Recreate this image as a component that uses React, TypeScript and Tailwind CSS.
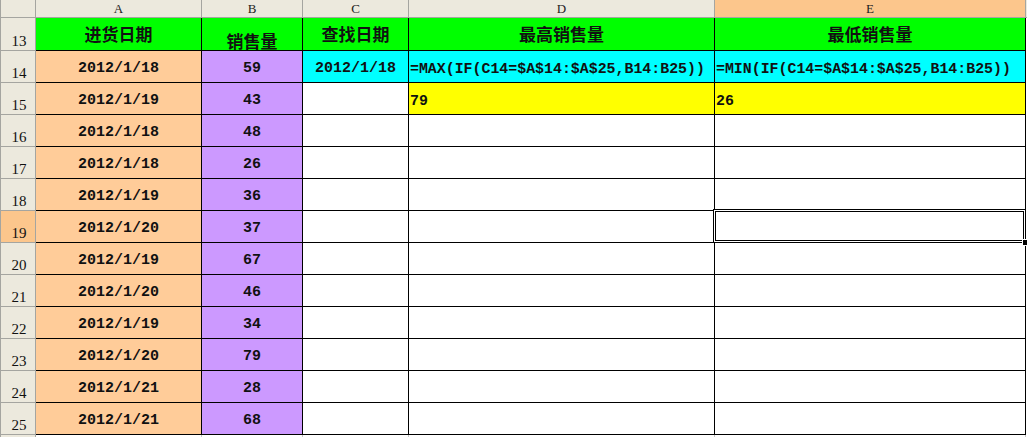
import React from "react";

const MONO = "font-['Liberation_Mono','DejaVu_Sans_Mono',monospace]";
const CJK = "font-['Noto_Sans_CJK_SC',sans-serif]";
const SERIF = "font-['Liberation_Serif','DejaVu_Serif',serif]";

const widths = ["w-[166px]", "w-[101px]", "w-[106px]", "w-[306px]", "w-[311px]"];

const data: [string, string][] = [
  ["2012/1/18", "59"],
  ["2012/1/19", "43"],
  ["2012/1/18", "48"],
  ["2012/1/18", "26"],
  ["2012/1/19", "36"],
  ["2012/1/20", "37"],
  ["2012/1/19", "67"],
  ["2012/1/20", "46"],
  ["2012/1/19", "34"],
  ["2012/1/20", "79"],
  ["2012/1/21", "28"],
  ["2012/1/21", "68"],
];

function RowHeader({ n, sel, h }: { n: string; sel?: boolean; h: string }) {
  return (
    <div
      className={`${h} w-[36px] shrink-0 border-l border-r border-b border-[#a5a5a0] ${
        sel ? "bg-[#fcc68c]" : "bg-[#ece9dd]"
      } flex items-end justify-center pb-[1px] pl-[2px] text-[15px] leading-none text-[#111] ${SERIF}`}
    >
      {n}
    </div>
  );
}

export default function App() {
  const cols = ["A", "B", "C", "D", "E"];
  return (
    <div className="w-[1027px] h-[437px] overflow-hidden bg-white">
      {/* column header */}
      <div className="flex h-[18px]">
        <div className="w-[36px] shrink-0 border-l border-r border-b border-[#a5a5a0] bg-[#ece9dd]" />
        {cols.map((c, i) => (
          <div
            key={c}
            className={`${widths[i]} shrink-0 border-r border-b border-[#a5a5a0] ${
              c === "E" ? "bg-[#fcc68c]" : "bg-[#ece9dd]"
            } flex items-center justify-center text-[13px] leading-none text-[#222] ${SERIF}`}
          >
            {c}
          </div>
        ))}
        <div className="flex-1 bg-[#ece9dd] border-b border-[#a5a5a0]" />
      </div>

      {/* row 13 */}
      <div className="flex h-[33px]">
        <RowHeader n="13" h="h-[33px]" />
        <div className={`${widths[0]} shrink-0 border-r border-b border-black bg-[#00ff00] flex items-center justify-center text-[17px] font-bold text-[#111] ${CJK}`}>
          进货日期
        </div>
        <div className={`${widths[1]} shrink-0 border-r border-b border-black bg-[#00ff00] flex items-end justify-center text-[17px] font-bold leading-[19px] text-[#111] ${CJK}`}>
          销售量
        </div>
        <div className={`${widths[2]} shrink-0 border-r border-b border-black bg-[#00ff00] flex items-center justify-center text-[17px] font-bold text-[#111] ${CJK}`}>
          查找日期
        </div>
        <div className={`${widths[3]} shrink-0 border-r border-b border-black bg-[#00ff00] flex items-center justify-center text-[17px] font-bold text-[#111] ${CJK}`}>
          最高销售量
        </div>
        <div className={`${widths[4]} shrink-0 border-r border-b border-black bg-[#00ff00] flex items-center justify-center text-[17px] font-bold text-[#111] ${CJK}`}>
          最低销售量
        </div>
        <div className="flex-1" />
      </div>

      {data.map(([d, v], idx) => {
        const rn = 14 + idx;
        const cBg = rn === 14 ? "bg-[#00ffff]" : "bg-white";
        const dBg = rn === 14 ? "bg-[#00ffff]" : rn === 15 ? "bg-[#ffff00]" : "bg-white";
        const dText =
          rn === 14
            ? "=MAX(IF(C14=$A$14:$A$25,B14:B25))"
            : rn === 15
            ? "79"
            : "";
        const eText =
          rn === 14
            ? "=MIN(IF(C14=$A$14:$A$25,B14:B25))"
            : rn === 15
            ? "26"
            : "";
        const sel = rn === 19;
        return (
          <div key={rn} className="flex h-[32px]">
            <RowHeader n={String(rn)} sel={sel} h="h-[32px]" />
            <div className={`${widths[0]} shrink-0 border-r border-b border-black bg-[#ffcc99] flex items-center justify-center pt-[6px] text-[15px] font-bold text-[#111] ${MONO}`}>
              {d}
            </div>
            <div className={`${widths[1]} shrink-0 border-r border-b border-black bg-[#cc99ff] flex items-center justify-center pt-[6px] text-[15px] font-bold text-[#111] ${MONO}`}>
              {v}
            </div>
            <div className={`${widths[2]} shrink-0 border-r border-b border-black ${cBg} flex items-center justify-center pt-[6px] text-[15px] font-bold text-[#111] ${MONO}`}>
              {rn === 14 ? "2012/1/18" : ""}
            </div>
            <div className={`${widths[3]} shrink-0 border-r border-b border-black ${dBg} flex items-center pl-[1px] pt-[6px] text-[14.9px] font-bold whitespace-nowrap text-[#111] ${MONO}`}>
              {dText}
            </div>
            <div className={`${widths[4]} shrink-0 border-r border-b border-black ${dBg} relative flex items-center pl-[1px] pt-[6px] text-[14.9px] font-bold whitespace-nowrap text-[#111] ${MONO}`}>
              {eText}
              {sel && (
                <>
                  <div className="absolute -left-[2px] -top-[2px] -right-px -bottom-px z-10 border border-black shadow-[inset_0_0_0_1px_#fff,inset_0_0_0_2px_#000]" />
                  <div className="absolute -right-[3px] -bottom-[3px] z-20 h-[5px] w-[5px] bg-black outline outline-1 outline-white" />
                </>
              )}
            </div>
            <div className="flex-1" />
          </div>
        );
      })}

      {/* partial row 26 */}
      <div className="flex h-[4px]">
        <div className="w-[36px] shrink-0 border-l border-r border-[#a5a5a0] bg-[#ece9dd]" />
        {cols.map((c, i) => (
          <div key={c} className={`${widths[i]} shrink-0 border-r border-[#c8c8c8] bg-white`} />
        ))}
      </div>
    </div>
  );
}
